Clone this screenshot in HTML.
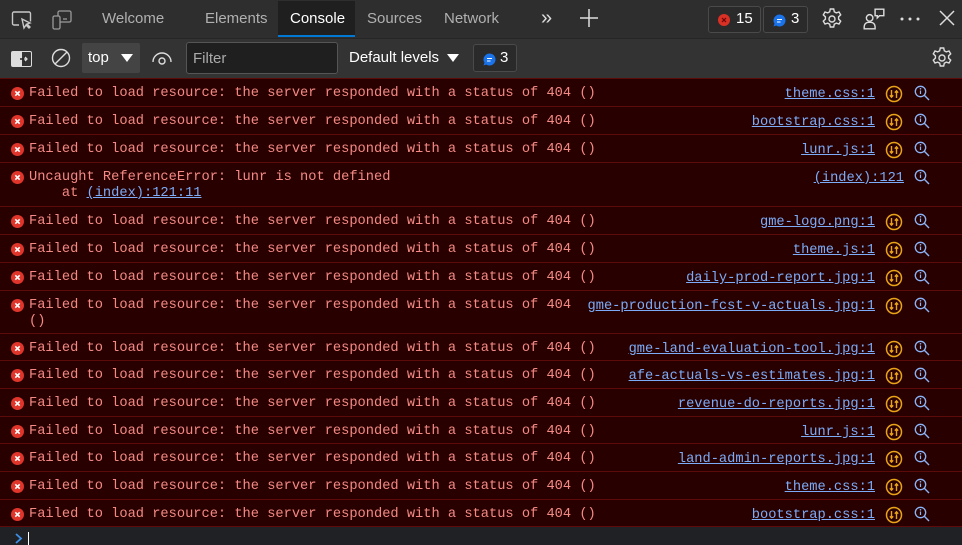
<!DOCTYPE html>
<html><head><meta charset="utf-8"><style>
*{margin:0;padding:0;box-sizing:border-box}
body{width:962px;height:545px;background:#202124;overflow:hidden;position:relative;font-family:"Liberation Sans",sans-serif}
.a{position:absolute}
.tabbar{left:0;top:0;width:962px;height:38px;background:#2e2e2e}
.tab{position:absolute;top:0;height:36px;line-height:37px;font-size:15px;color:#b0b0b0}
.tb{left:0;top:38px;width:962px;height:40px;background:#333333;border-top:1px solid #262626}
.row{position:absolute;left:0;width:962px;background:#290000;border-top:1px solid #5c0a0a}
.msg{position:absolute;left:29px;top:7px;font-family:"Liberation Mono",monospace;font-size:13.7px;line-height:16px;color:#f48a85;white-space:pre}
.ic{position:absolute;left:11px;top:8px;width:13px;height:13px}
.lk{position:absolute;right:87px;top:8px;font-family:"Liberation Mono",monospace;font-size:13.7px;line-height:16px;color:#7cacf8;text-decoration:underline;white-space:pre}
.or{position:absolute;left:885px;top:6px;width:18px;height:18px}
.sr{position:absolute;left:914px;top:6px;width:16px;height:16px}
.btn{position:absolute;border:1px solid #4a4a4a;border-radius:3px;background:#2a2a2a;color:#fff;font-size:15px}
</style></head><body>
<div class="a tabbar">
<svg class="a" style="left:11px;top:10px" width="22" height="20" viewBox="0 0 22 20" fill="none" stroke="#c8c8c8" stroke-width="1.4"><path d="M8 15H3a1.5 1.5 0 0 1-1.5-1.5v-10A1.5 1.5 0 0 1 3 2h15a1.5 1.5 0 0 1 1.5 1.5v8"/><path d="M11 9l2 9 2-3 3 3 1-1-3-3 3-1z" fill="#2e2e2e"/></svg>
<svg class="a" style="left:51px;top:10px" width="22" height="20" viewBox="0 0 22 20" fill="none" stroke="#9a9a9a" stroke-width="1.3"><rect x="7" y="1" width="13" height="11" rx="1.5"/><rect x="2" y="6" width="7" height="13" rx="1.5" fill="#2e2e2e"/><path d="M12 9h4"/></svg>
<div class="tab" style="left:102px">Welcome</div>
<div class="tab" style="left:205px">Elements</div>
<div class="a" style="left:278px;top:1px;width:77px;height:36px;background:#1f1f1f;border-bottom:2px solid #0078d4"></div>
<div class="tab" style="left:290px;color:#fff">Console</div>
<div class="tab" style="left:367px">Sources</div>
<div class="tab" style="left:444px">Network</div>
<div class="tab" style="left:541px;color:#ddd;font-size:20px">»</div>
<svg class="a" style="left:579px;top:8px" width="20" height="20" stroke="#ddd" stroke-width="1.5"><path d="M10 1v18M1 10h18"/></svg>
<div class="btn" style="left:708px;top:6px;width:53px;height:27px"><svg class="a" style="left:9px;top:7px" width="12" height="12"><circle cx="6" cy="6" r="6" fill="#d93025"/><path d="M4 4l4 4M8 4l-4 4" stroke="#600" stroke-width="1.2"/></svg><span class="a" style="left:27px;top:3px">15</span></div>
<div class="btn" style="left:763px;top:6px;width:45px;height:27px"><svg class="a" style="left:9px;top:7px" width="13" height="13"><path d="M6.5 0.5a6 6 0 1 1-5 9.3L0.5 12.5l2.7-1A6 6 0 0 1 6.5 0.5z" fill="#1a73e8"/><path d="M4 5.5h5M4 8h3.5" stroke="#fff" stroke-width="1.1"/></svg><span class="a" style="left:27px;top:3px">3</span></div>
<svg class="a" style="left:820px;top:7px" width="24" height="24" viewBox="0 0 24 24" fill="none" stroke="#ddd" stroke-width="1.4"><circle cx="12" cy="12" r="3"/><path d="M10.3 2h3.4l.6 2.8 2 1.1 2.7-.9 1.7 2.9-2.1 1.9v2.4l2.1 1.9-1.7 2.9-2.7-.9-2 1.1-.6 2.8h-3.4l-.6-2.8-2-1.1-2.7.9-1.7-2.9 2.1-1.9V9.8L3.3 7.9 5 5l2.7.9 2-1.1z"/></svg>
<svg class="a" style="left:862px;top:7px" width="24" height="24" viewBox="0 0 22 22" fill="none" stroke="#ddd" stroke-width="1.3"><circle cx="7" cy="10" r="3"/><path d="M2 20v-2a4 4 0 0 1 4-4h2a4 4 0 0 1 4 4v2z"/><path d="M12 2h8v6h-4l-2 2v-2h-2z"/></svg>
<svg class="a" style="left:900px;top:17px" width="20" height="4" fill="#ddd"><circle cx="2" cy="2" r="1.5"/><circle cx="10" cy="2" r="1.5"/><circle cx="18" cy="2" r="1.5"/></svg>
<svg class="a" style="left:938px;top:9px" width="18" height="18" stroke="#ddd" stroke-width="1.5"><path d="M2 2l14 14M16 2L2 16"/></svg>
</div>
<div class="a tb">
<svg class="a" style="left:11px;top:12px" width="21" height="16"><rect x="0.5" y="0.5" width="20" height="15" rx="1.5" fill="none" stroke="#ddd"/><rect x="1" y="1" width="10" height="14" fill="#ddd"/><path d="M9 8h7M13 5l3 3-3 3" stroke="#222" stroke-width="1.4" fill="none"/><path d="M13 8h3M14 6l2 2-2 2" stroke="#ddd" stroke-width="1.3" fill="none"/></svg>
<svg class="a" style="left:51px;top:9px" width="20" height="20" fill="none" stroke="#ddd" stroke-width="1.4"><circle cx="10" cy="10" r="8.5"/><path d="M4 16L16 4"/></svg>
<div class="a" style="left:82px;top:4px;width:58px;height:30px;background:#444;border-radius:2px"></div>
<div class="a" style="left:88px;top:10px;color:#fff;font-size:15px">top</div>
<svg class="a" style="left:121px;top:15px" width="12" height="9"><path d="M0 0h12L6 8z" fill="#fff"/></svg>
<svg class="a" style="left:152px;top:12px" width="20" height="14" fill="none" stroke="#ddd" stroke-width="1.4"><path d="M1 11a9 9 0 0 1 18 0"/><circle cx="10" cy="10" r="3"/></svg>
<div class="a" style="left:186px;top:3px;width:152px;height:32px;background:#1f1f1f;border:1px solid #555;border-radius:3px"></div>
<div class="a" style="left:193px;top:11px;color:#aaa;font-size:15px">Filter</div>
<div class="a" style="left:349px;top:10px;color:#fff;font-size:15px">Default levels</div>
<svg class="a" style="left:447px;top:15px" width="12" height="9"><path d="M0 0h12L6 8z" fill="#fff"/></svg>
<div class="btn" style="left:473px;top:5px;width:44px;height:28px;background:#2a2a2a"><svg class="a" style="left:9px;top:8px" width="13" height="13"><path d="M6.5 0.5a6 6 0 1 1-5 9.3L0.5 12.5l2.7-1A6 6 0 0 1 6.5 0.5z" fill="#1a73e8"/><path d="M4 5.5h5M4 8h3.5" stroke="#fff" stroke-width="1.1"/></svg><span class="a" style="left:26px;top:4px">3</span></div>
<svg class="a" style="left:930px;top:7px" width="24" height="24" viewBox="0 0 24 24" fill="none" stroke="#ddd" stroke-width="1.4"><circle cx="12" cy="12" r="3"/><path d="M10.3 2h3.4l.6 2.8 2 1.1 2.7-.9 1.7 2.9-2.1 1.9v2.4l2.1 1.9-1.7 2.9-2.7-.9-2 1.1-.6 2.8h-3.4l-.6-2.8-2-1.1-2.7.9-1.7-2.9 2.1-1.9V9.8L3.3 7.9 5 5l2.7.9 2-1.1z"/></svg>
</div>

<svg width="0" height="0" style="position:absolute"><defs>
<symbol id="er" viewBox="0 0 13 13"><circle cx="6.5" cy="6.5" r="6.5" fill="#e0352b"/><path d="M4.3 4.3l4.4 4.4M8.7 4.3l-4.4 4.4" stroke="#fff" stroke-width="1.6"/></symbol>
<symbol id="og" viewBox="0 0 18 18"><circle cx="9" cy="9" r="7.5" fill="none" stroke="#e8a317" stroke-width="1.5"/><path d="M6.5 5v7M4.8 10.3l1.7 1.9 1.7-1.9M11.5 13V6M9.8 7.7l1.7-1.9 1.7 1.9" stroke="#e8a317" stroke-width="1.4" fill="none"/></symbol>
<symbol id="sr" viewBox="0 0 16 16"><circle cx="6.5" cy="6.5" r="5.2" fill="none" stroke="#8ab4f8" stroke-width="1.3"/><path d="M10.3 10.3L15 15" stroke="#8ab4f8" stroke-width="1.4"/><path d="M6.5 5.5v3.5" stroke="#8ab4f8" stroke-width="1.2"/><circle cx="6.5" cy="3.8" r="0.8" fill="#8ab4f8"/></symbol>
</defs></svg>

<div class="row" style="top:78px;height:28px"><svg class="ic"><use href="#er"/></svg><div class="msg">Failed to load resource: the server responded with a status of 404 ()</div><div class="lk">theme.css:1</div><svg class="or"><use href="#og"/></svg><svg class="sr"><use href="#sr"/></svg></div>
<div class="row" style="top:106px;height:28px"><svg class="ic"><use href="#er"/></svg><div class="msg">Failed to load resource: the server responded with a status of 404 ()</div><div class="lk">bootstrap.css:1</div><svg class="or"><use href="#og"/></svg><svg class="sr"><use href="#sr"/></svg></div>
<div class="row" style="top:134px;height:28px"><svg class="ic"><use href="#er"/></svg><div class="msg">Failed to load resource: the server responded with a status of 404 ()</div><div class="lk">lunr.js:1</div><svg class="or"><use href="#og"/></svg><svg class="sr"><use href="#sr"/></svg></div>
<div class="row" style="top:162px;height:44px"><svg class="ic"><use href="#er"/></svg><div class="msg">Uncaught ReferenceError: lunr is not defined
    at <span style="color:#7cacf8;text-decoration:underline">(index):121:11</span></div><div class="lk" style="right:58px">(index):121</div><svg class="sr"><use href="#sr"/></svg></div>
<div class="row" style="top:206px;height:28px"><svg class="ic"><use href="#er"/></svg><div class="msg">Failed to load resource: the server responded with a status of 404 ()</div><div class="lk">gme-logo.png:1</div><svg class="or"><use href="#og"/></svg><svg class="sr"><use href="#sr"/></svg></div>
<div class="row" style="top:234px;height:28px"><svg class="ic"><use href="#er"/></svg><div class="msg">Failed to load resource: the server responded with a status of 404 ()</div><div class="lk">theme.js:1</div><svg class="or"><use href="#og"/></svg><svg class="sr"><use href="#sr"/></svg></div>
<div class="row" style="top:262px;height:28px"><svg class="ic"><use href="#er"/></svg><div class="msg">Failed to load resource: the server responded with a status of 404 ()</div><div class="lk">daily-prod-report.jpg:1</div><svg class="or"><use href="#og"/></svg><svg class="sr"><use href="#sr"/></svg></div>
<div class="row" style="top:290px;height:43px"><svg class="ic"><use href="#er"/></svg><div class="msg">Failed to load resource: the server responded with a status of 404
()</div><div class="lk">gme-production-fcst-v-actuals.jpg:1</div><svg class="or"><use href="#og"/></svg><svg class="sr"><use href="#sr"/></svg></div>
<div class="row" style="top:333px;height:27px"><svg class="ic"><use href="#er"/></svg><div class="msg">Failed to load resource: the server responded with a status of 404 ()</div><div class="lk">gme-land-evaluation-tool.jpg:1</div><svg class="or"><use href="#og"/></svg><svg class="sr"><use href="#sr"/></svg></div>
<div class="row" style="top:360px;height:28px"><svg class="ic"><use href="#er"/></svg><div class="msg">Failed to load resource: the server responded with a status of 404 ()</div><div class="lk">afe-actuals-vs-estimates.jpg:1</div><svg class="or"><use href="#og"/></svg><svg class="sr"><use href="#sr"/></svg></div>
<div class="row" style="top:388px;height:28px"><svg class="ic"><use href="#er"/></svg><div class="msg">Failed to load resource: the server responded with a status of 404 ()</div><div class="lk">revenue-do-reports.jpg:1</div><svg class="or"><use href="#og"/></svg><svg class="sr"><use href="#sr"/></svg></div>
<div class="row" style="top:416px;height:27px"><svg class="ic"><use href="#er"/></svg><div class="msg">Failed to load resource: the server responded with a status of 404 ()</div><div class="lk">lunr.js:1</div><svg class="or"><use href="#og"/></svg><svg class="sr"><use href="#sr"/></svg></div>
<div class="row" style="top:443px;height:28px"><svg class="ic"><use href="#er"/></svg><div class="msg">Failed to load resource: the server responded with a status of 404 ()</div><div class="lk">land-admin-reports.jpg:1</div><svg class="or"><use href="#og"/></svg><svg class="sr"><use href="#sr"/></svg></div>
<div class="row" style="top:471px;height:28px"><svg class="ic"><use href="#er"/></svg><div class="msg">Failed to load resource: the server responded with a status of 404 ()</div><div class="lk">theme.css:1</div><svg class="or"><use href="#og"/></svg><svg class="sr"><use href="#sr"/></svg></div>
<div class="row" style="top:499px;height:28px;border-bottom:1px solid #5c0a0a"><svg class="ic"><use href="#er"/></svg><div class="msg">Failed to load resource: the server responded with a status of 404 ()</div><div class="lk">bootstrap.css:1</div><svg class="or"><use href="#og"/></svg><svg class="sr"><use href="#sr"/></svg></div>
<svg class="a" style="left:15px;top:533px" width="8" height="11"><path d="M1 1l5 4.5L1 10" stroke="#3c8fe8" stroke-width="1.8" fill="none"/></svg>
<div class="a" style="left:28px;top:532px;width:1px;height:13px;background:#fff"></div>
</body></html>
